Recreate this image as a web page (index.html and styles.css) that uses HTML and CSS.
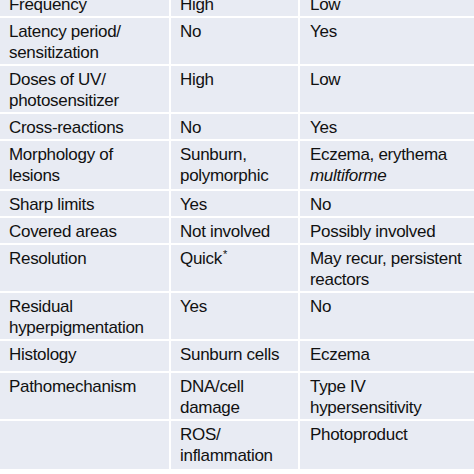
FILE: index.html
```html
<!DOCTYPE html>
<html>
<head>
<meta charset="utf-8">
<link rel="stylesheet" href="styles.css">
</head>
<body>
<div class="table">
  <div class="cell">Frequency</div><div class="cell">High</div><div class="cell">Low</div>
  <div class="cell">Latency period/<br>sensitization</div><div class="cell">No</div><div class="cell">Yes</div>
  <div class="cell">Doses of UV/<br>photosensitizer</div><div class="cell">High</div><div class="cell">Low</div>
  <div class="cell">Cross-reactions</div><div class="cell">No</div><div class="cell">Yes</div>
  <div class="cell tall">Morphology of<br>lesions</div><div class="cell tall">Sunburn,<br>polymorphic</div><div class="cell tall">Eczema, erythema<br><em>multiforme</em></div>
  <div class="cell">Sharp limits</div><div class="cell">Yes</div><div class="cell">No</div>
  <div class="cell">Covered areas</div><div class="cell">Not involved</div><div class="cell">Possibly involved</div>
  <div class="cell">Resolution</div><div class="cell">Quick<sup>*</sup></div><div class="cell">May recur, persistent<br>reactors</div>
  <div class="cell">Residual<br>hyperpigmentation</div><div class="cell">Yes</div><div class="cell">No</div>
  <div class="cell histo">Histology</div><div class="cell histo">Sunburn cells</div><div class="cell histo">Eczema</div>
  <div class="cell">Pathomechanism</div><div class="cell">DNA/cell<br>damage</div><div class="cell">Type IV<br>hypersensitivity</div>
  <div class="cell last"></div><div class="cell last">ROS/<br>inflammation</div><div class="cell last">Photoproduct</div>
</div>
</body>
</html>
```
FILE: styles.css
```css
html, body {
  margin: 0;
  padding: 0;
  background: #ffffff;
}
body {
  width: 474px;
  height: 474px;
  overflow: hidden;
}
.table {
  display: grid;
  grid-template-columns: 169px 127px 1fr;
  gap: 2px;
  background: #ffffff;
  margin-top: -9px;
  font-family: "Liberation Sans", Arial, sans-serif;
  font-size: 17px;
  line-height: 21px;
  letter-spacing: -0.3px;
  color: #111111;
}
.cell {
  background: #e8ebf3;
  padding: 3px 0 1px 9px;
  white-space: nowrap;
}
.cell:nth-child(3n) {
  padding-left: 10px;
}
.tall {
  padding-bottom: 3px;
}
.histo {
  padding-bottom: 6px;
}
.last {
  padding-bottom: 3px;
}
em {
  font-style: italic;
}
sup {
  font-size: 11px;
  line-height: 0;
  vertical-align: 6px;
  margin-left: 1px;
}
```
